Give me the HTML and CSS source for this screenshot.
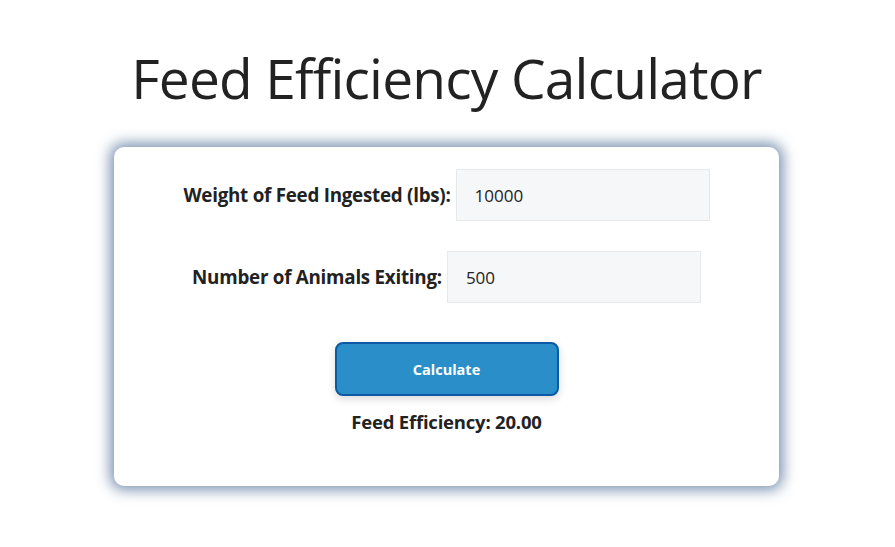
FILE: index.html
```html
<!DOCTYPE html>
<html>
<head>
<meta charset="utf-8">
<link rel="stylesheet" href="styles.css">
</head>
<body>
<h1 class="title">Feed Efficiency Calculator</h1>
<div class="card">
  <div class="row row-1">
    <label class="label">Weight of Feed Ingested (lbs):</label>
    <input class="input" type="text" value="10000">
  </div>
  <div class="row row-2">
    <label class="label">Number of Animals Exiting:</label>
    <input class="input" type="text" value="500">
  </div>
  <button class="btn">Calculate</button>
  <div class="result">Feed Efficiency: 20.00</div>
</div>
</body>
</html>
```

FILE: styles.css
```css
html, body {
  margin: 0;
  padding: 0;
  background: #ffffff;
}
body {
  font-family: "Open Sans", "Noto Sans", sans-serif;
  color: #212529;
  display: flex;
  flex-direction: column;
  align-items: center;
  padding-bottom: 40px;
  padding-right: 2px;
}
.title {
  margin: 45px 0 0 0;
  font-weight: 400;
  font-size: 55px;
  line-height: 66px;
  letter-spacing: -0.8px;
  color: #222;
}
.card {
  margin-top: 36px;
  width: 665px;
  height: 339px;
  box-sizing: border-box;
  background: #fff;
  border-radius: 10px;
  box-shadow: 0 0 14px 4px rgba(35, 75, 125, 0.6);
  padding-top: 22px;
  display: flex;
  flex-direction: column;
  align-items: center;
}
.row {
  display: flex;
  align-items: center;
  gap: 5px;
}
.row-2 {
  margin-top: 30px;
}
.label {
  font-weight: 700;
  font-size: 18.8px;
  letter-spacing: -0.25px;
  color: #222;
}
.input {
  width: 254px;
  height: 52px;
  box-sizing: border-box;
  border: 1px solid #e6e9ec;
  background: #f6f7f9;
  padding: 0 0 0 18px;
  font-family: "Open Sans", "Noto Sans", sans-serif;
  font-size: 17px;
  color: #222;
  border-radius: 0;
  outline: none;
}
.btn {
  margin-top: 39px;
  width: 224px;
  height: 54px;
  box-sizing: border-box;
  background: #2a8fc9;
  border: 2px solid #0c5aa6;
  border-radius: 8px;
  color: #fff;
  font-family: "Open Sans", "Noto Sans", sans-serif;
  font-weight: 700;
  font-size: 14.5px;
  box-shadow: 0 3px 8px rgba(0, 0, 0, 0.15);
}
.result {
  margin-top: 13px;
  font-weight: 700;
  font-size: 18.5px;
  letter-spacing: -0.2px;
  color: #222;
}
```
